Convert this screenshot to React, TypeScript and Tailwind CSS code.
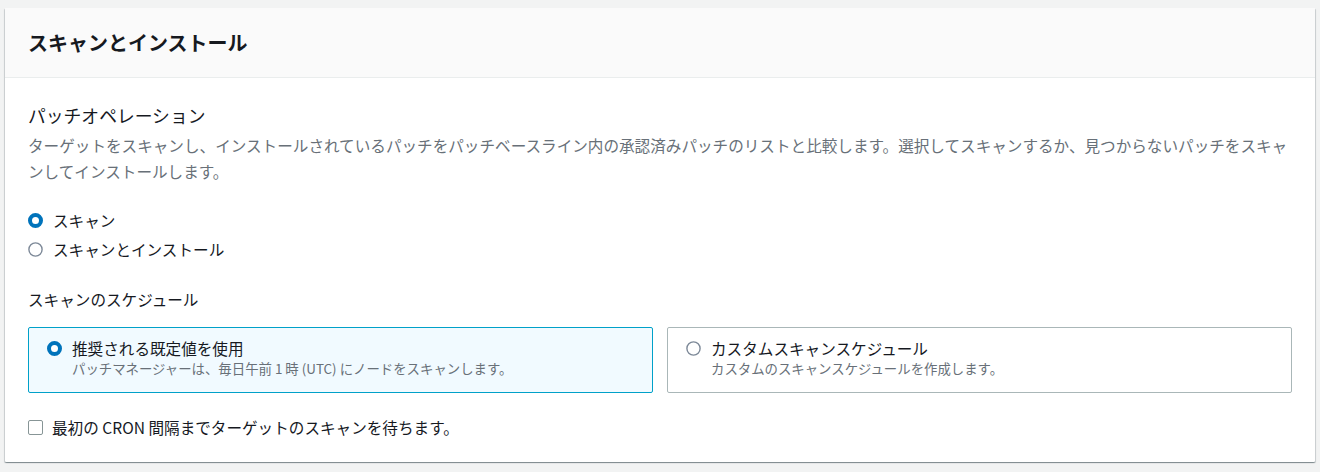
import React from 'react';

const FONT = { fontFamily: '"Noto Sans CJK JP", "Noto Sans", sans-serif' };

function Radio({ checked }: { checked: boolean }) {
  return (
    <svg width="15" height="15" viewBox="0 0 15 15" className="shrink-0">
      {checked ? (
        <circle cx="7.5" cy="7.5" r="5.5" fill="#ffffff" stroke="#0073bb" strokeWidth="4" />
      ) : (
        <circle cx="7.5" cy="7.5" r="6.6" fill="#ffffff" stroke="#7d8998" strokeWidth="1.4" />
      )}
    </svg>
  );
}

function Tile({
  checked,
  label,
  description,
}: {
  checked: boolean;
  label: string;
  description: string;
}) {
  return (
    <div
      className={
        checked
          ? 'flex-1 h-[66px] rounded-[2px] border border-[#00a1c9] bg-[#f1faff] pl-[18px] pt-[9px]'
          : 'flex-1 h-[66px] rounded-[2px] border border-[#aab7b8] bg-white pl-[18px] pt-[9px]'
      }
    >
      <div className="flex items-center gap-[10px] h-[22px]">
        <Radio checked={checked} />
        <span className="text-[15.6px] leading-[22px] text-[#16191f]">{label}</span>
      </div>
      <div className="pl-[25px] text-[13.4px] leading-[18px] text-[#687078]">{description}</div>
    </div>
  );
}

export default function App() {
  return (
    <div style={FONT} className="w-[1320px] h-[472px] bg-[#f2f3f3] pt-[8px] px-[5px]">
      <div className="bg-white rounded-[1px] shadow-[0_1px_1px_0_rgba(0,28,36,0.3),1px_1px_1px_0_rgba(0,28,36,0.15),-1px_1px_1px_0_rgba(0,28,36,0.15)]">
        {/* Header */}
        <div className="h-[70px] flex items-center px-[23px] bg-[#fafafa] border-b border-[#eaeded]">
          <h2 className="text-[20px] font-bold text-[#16191f] leading-[26px]">スキャンとインストール</h2>
        </div>

        {/* Body */}
        <div className="px-[23px] pt-[25px] pb-[24px]">
          <div className="text-[17.8px] leading-[24px] text-[#16191f]">パッチオペレーション</div>
          <p className="mt-[5px] text-[15.6px] leading-[26px] text-[#687078]">
            ターゲットをスキャンし、インストールされているパッチをパッチベースライン内の承認済みパッチのリストと比較します。選択してスキャンするか、見つからないパッチをスキャンしてインストールします。
          </p>

          <div className="mt-[25px] flex flex-col gap-[7px]">
            <label className="flex items-center gap-[10px] h-[22px]">
              <Radio checked />
              <span className="text-[15.6px] leading-[22px] text-[#16191f]">スキャン</span>
            </label>
            <label className="flex items-center gap-[10px] h-[22px]">
              <Radio checked={false} />
              <span className="text-[15.6px] leading-[22px] text-[#16191f]">スキャンとインストール</span>
            </label>
          </div>

          <div className="mt-[28px] text-[15.6px] leading-[22px] text-[#16191f]">スキャンのスケジュール</div>

          <div className="mt-[17px] flex gap-[14px]">
            <Tile
              checked
              label="推奨される既定値を使用"
              description="パッチマネージャーは、毎日午前 1 時 (UTC) にノードをスキャンします。"
            />
            <Tile
              checked={false}
              label="カスタムスキャンスケジュール"
              description="カスタムのスキャンスケジュールを作成します。"
            />
          </div>

          <label className="mt-[23px] flex items-center gap-[9px] h-[22px]">
            <span className="w-[15px] h-[15px] rounded-[2px] border-[1.5px] border-[#879596] bg-white shrink-0" />
            <span className="text-[15.6px] leading-[22px] text-[#16191f]">
              最初の CRON 間隔までターゲットのスキャンを待ちます。
            </span>
          </label>
        </div>
      </div>
    </div>
  );
}
